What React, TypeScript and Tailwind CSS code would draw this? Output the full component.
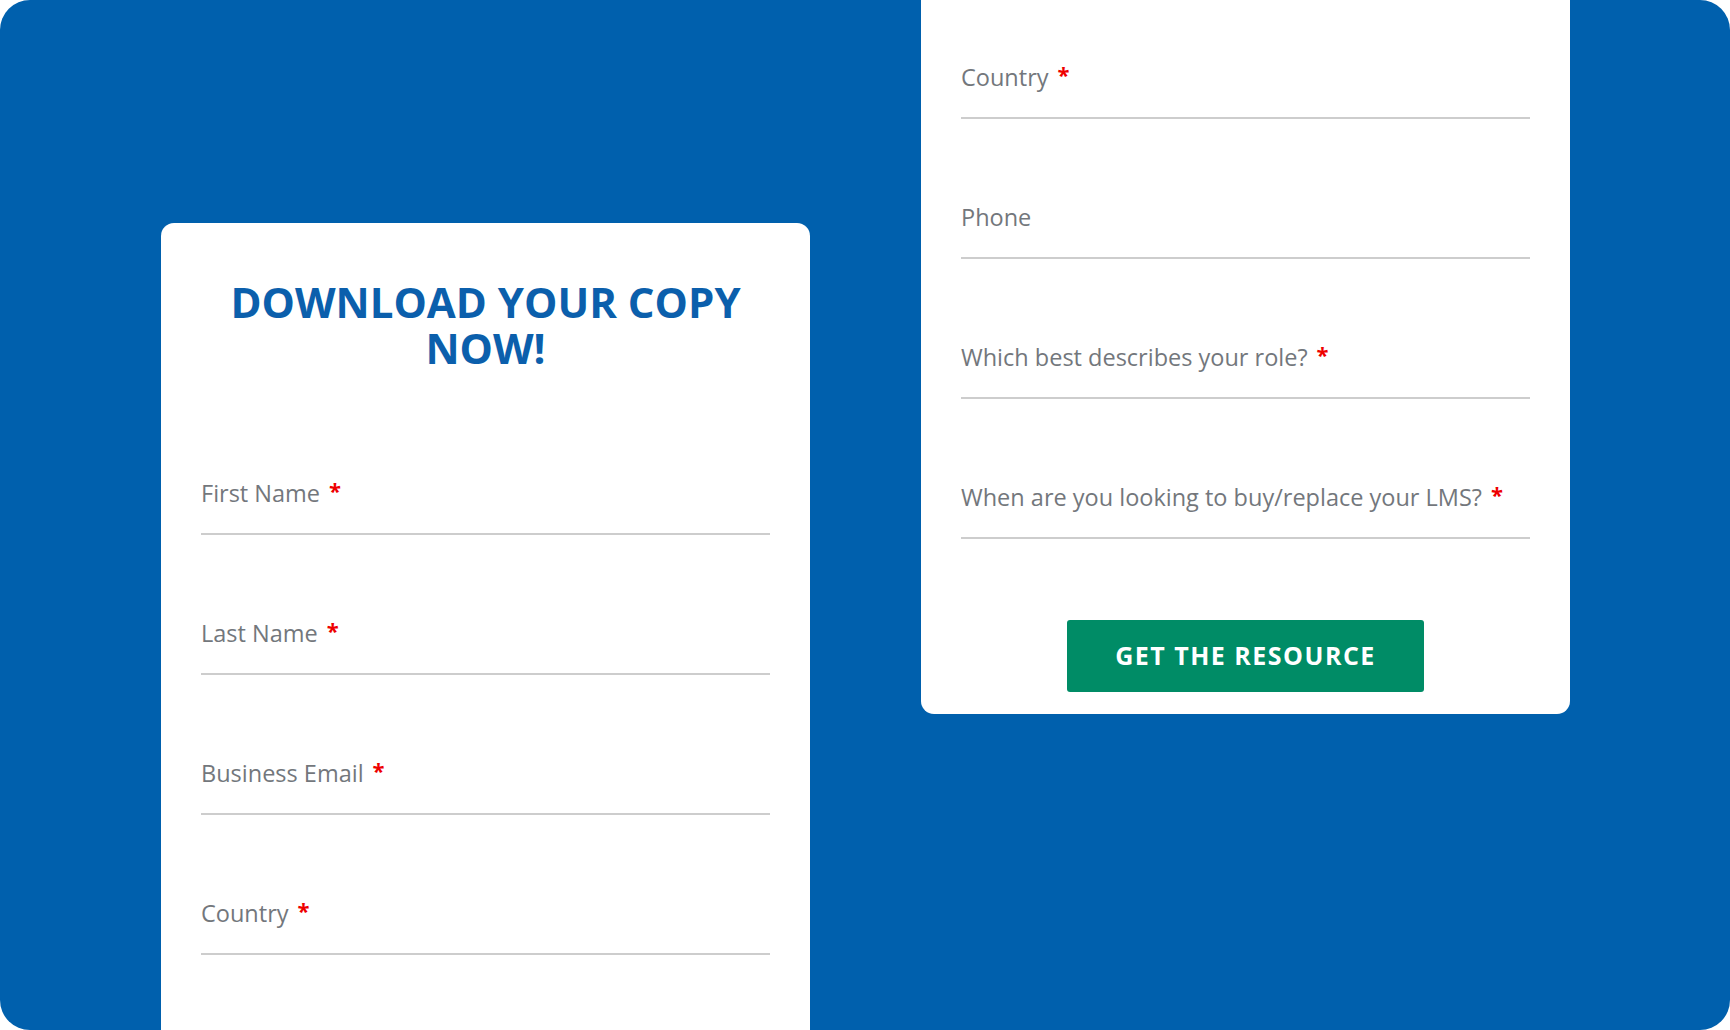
function Field({ label, required = true, className = "h-[140px]" }: { label: string; required?: boolean; className?: string }) {
  return (
    <div className={`flex flex-col justify-end border-b-2 border-[#cdcdcd] ${className}`}>
      <div className="mb-[24px] flex items-start text-[23.5px] leading-[32px] text-[#73777c]">
        <span>{label}</span>
        {required && <span className="ml-[9px] text-[22px] font-bold leading-[26px] text-[#ee0000]">*</span>}
      </div>
    </div>
  );
}

export default function App() {
  return (
    <div className="h-[1030px] w-[1730px] bg-white font-['Open_Sans',sans-serif]">
      <div className="flex h-full w-full overflow-hidden rounded-[30px] bg-[#0060ad]">
        <div className="ml-[161px] mt-[223px] flex w-[649px] shrink-0 flex-col rounded-t-[13px] bg-white px-[40px] pt-[56px]">
          <h1 className="flex flex-col items-center text-[42px] font-bold leading-[46px] text-[#0b5fac]">
            <span>DOWNLOAD YOUR COPY</span>
            <span>NOW!</span>
          </h1>
          <div className="mt-[24px] flex flex-col">
            <Field label="First Name" />
            <Field label="Last Name" />
            <Field label="Business Email" />
            <Field label="Country" />
          </div>
        </div>

        <div className="ml-[111px] flex h-[714px] w-[649px] shrink-0 flex-col rounded-b-[13px] bg-white px-[40px]">
          <Field label="Country" className="h-[119px]" />
          <Field label="Phone" required={false} />
          <Field label="Which best describes your role?" />
          <Field label="When are you looking to buy/replace your LMS?" />
          <div className="mt-[81px] flex justify-center">
            <button className="h-[72px] w-[357px] rounded-[3px] bg-[#008c66] text-[25px] font-bold tracking-[1.5px] text-white">
              GET THE RESOURCE
            </button>
          </div>
        </div>
      </div>
    </div>
  );
}
